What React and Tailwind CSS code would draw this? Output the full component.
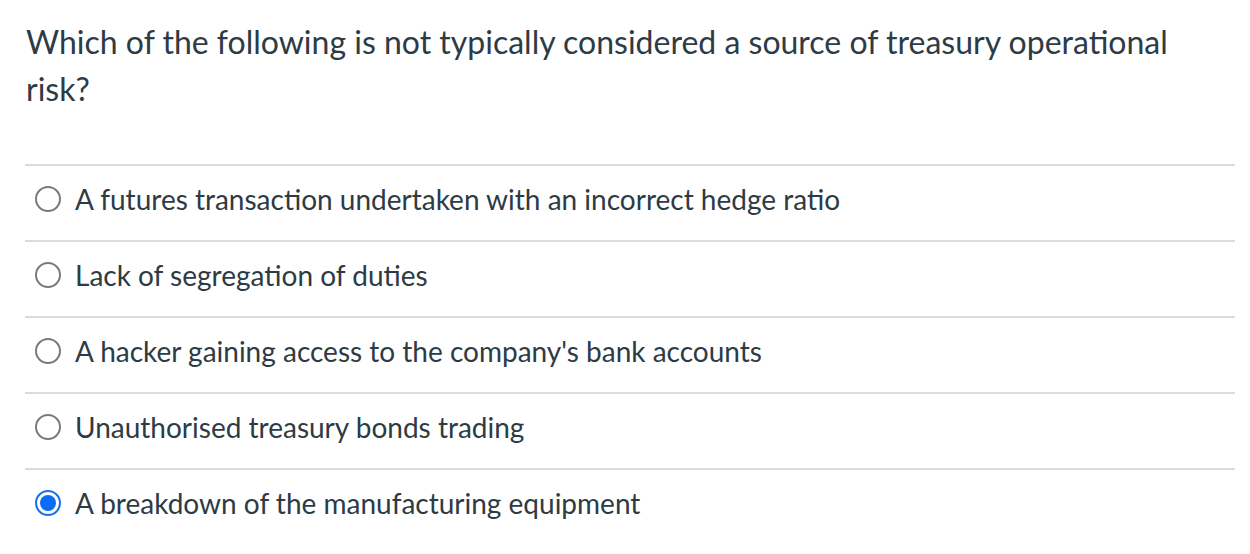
export default function App() {
  const options = [
    "A futures transaction undertaken with an incorrect hedge ratio",
    "Lack of segregation of duties",
    "A hacker gaining access to the company's bank accounts",
    "Unauthorised treasury bonds trading",
    "A breakdown of the manufacturing equipment",
  ];
  return (
    <div className="w-[1250px] h-[554px] bg-white overflow-hidden text-[#2d3b45]" style={{ fontFamily: "Lato, 'Open Sans', sans-serif" }}>
      <div className="pl-[26px] pr-[40px] pt-[18px] text-[32px] leading-[47px]">
        Which of the following is not typically considered a source of treasury operational risk?
      </div>
      <div className="mt-[52px] ml-[25px] w-[1210px]">
        {options.map((o, i) => (
          <div key={i} className="border-t-2 border-[#dcdcdc] h-[76px] pb-[8px] flex items-center">
            {i === 4 ? (
              <span className="ml-[10px] w-[26px] h-[26px] rounded-full border-2 border-[#1a6ee8] flex items-center justify-center">
                <span className="w-[16px] h-[16px] rounded-full bg-[#0b6cf5]" />
              </span>
            ) : (
              <span className="ml-[10px] w-[26px] h-[26px] rounded-full border-2 border-[#7a7a7a]" />
            )}
            <span className="ml-[14px] text-[28px]">{o}</span>
          </div>
        ))}
      </div>
    </div>
  );
}
